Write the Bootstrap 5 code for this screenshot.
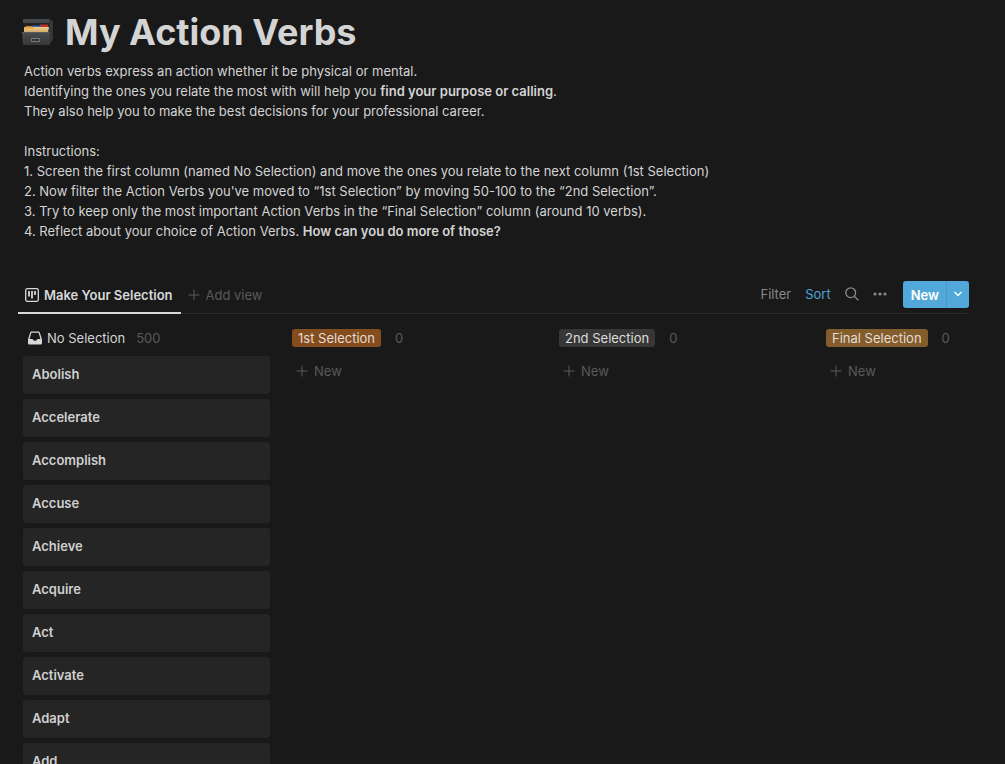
<!DOCTYPE html>
<html lang="en" data-bs-theme="dark">
<head>
<meta charset="utf-8">
<meta name="viewport" content="width=device-width, initial-scale=1">
<title>My Action Verbs</title>
<link href="https://cdn.jsdelivr.net/npm/bootstrap@5.3.0/dist/css/bootstrap.min.css" rel="stylesheet">
<style>
  body { background: #191919; color: #d4d4d4; font-family: Inter, "Liberation Sans", sans-serif; font-size: 13px; line-height: 20px; }
  .page { padding: 8px 36px 0 18px; }
  .page-title { font-size: 36px; line-height: 48px; font-weight: 700; color: #d4d4d4; }
  .page-head { gap: 11px; padding-left: 4px; }
  .intro { padding-left: 6px; margin-top: 5px; }
  .intro strong { font-weight: 600; }
  .views { margin-top: 36px; border-bottom: 1px solid #2a2a2a; height: 37px; }
  .plain-btn { background: none; border: 0; padding: 0; color: #5a5a5a; font-size: 13px; line-height: 20px; display: inline-flex; align-items: center; }
  .view-tab { color: #d8d8d8; font-weight: 600; gap: 5px; padding: 0 8px 0 7px; height: 37px; border-bottom: 2px solid #d8d8d8; }
  .add-view { gap: 6px; padding-left: 7px; }
  .tools { gap: 14px; padding-bottom: 2px; }
  .tools .plain-btn { color: #8a8a8a; }
  .tools .plain-btn.sorting { color: #4ba6d5; }
  .new-group { margin-left: 2px; }
  .new-group .btn { --bs-btn-bg: #52a9d9; --bs-btn-hover-bg: #4598c6; --bs-btn-color: #fff; --bs-btn-border-width: 0; font-size: 13px; line-height: 20px; font-weight: 600; padding: 4px 8px; border-radius: 3px; height: 27px; }
  .new-group .btn.arrow { border-left: 1px solid #469aca; padding: 0 6px; }
  .board { gap: 20px; padding: 13px 0 0 5px; }
  .board-col { flex: 0 0 247px; }
  .col-head { height: 22px; padding-left: 2px; }
  .col-head-none { padding-left: 5px; gap: 5px; }
  .count { color: #5a5a5a; margin-left: 14px; }
  .col-head-none .count { margin-left: 6px; }
  .tag { border-radius: 3px; padding: 0 6px; line-height: 18px; color: #e2dcd6; }
  .tag-orange { background: #854c1d; }
  .tag-gray { background: #373737; color: #dcdcdc; }
  .tag-yellow { background: #835e2c; }
  .add-new { gap: 6px; padding-left: 6px; margin-top: 12px; }
  .verbs { gap: 5px; margin-top: 7px; }
  .verb { background: #252525; border-radius: 3px; padding: 8px 9px 10px; font-weight: 600; color: #d0d0d0; }
</style>
</head>
<body class="vh-100 overflow-hidden">
<main class="page">
  <header class="page-head d-flex align-items-center">
    <svg width="32" height="30" viewBox="0 0 32 30" aria-hidden="true">
      <defs>
        <linearGradient id="front" x1="0" y1="0" x2="0" y2="1"><stop offset="0" stop-color="#4a4c4e"/><stop offset="1" stop-color="#353738"/></linearGradient>
        <linearGradient id="paper" x1="0" y1="0" x2="0" y2="1"><stop offset="0" stop-color="#f5d28c"/><stop offset="1" stop-color="#c9a46a"/></linearGradient>
      </defs>
      <path d="M2 2H27L31 4V23L27 28H2Z" fill="#2c2e2f"/>
      <path d="M1 2H27V6H1Z" fill="#46494b"/>
      <path d="M2 6H27V15H2Z" fill="#202122"/>
      <path d="M27 2L31 4V22L27 28Z" fill="#343637"/>
      <path d="M18 7.500H26V11H18Z" fill="#b93224"/>
      <path d="M11 8.500H19V11H11Z" fill="#3464b4"/>
      <path d="M2 10.500L4 9.500H10L12 10H27L26 16H2Z" fill="url(#paper)"/>
      <path d="M2 11.500L4 9.500H10L12 11.500Z" fill="#f09a38"/>
      <path d="M0 15H27.500V28H1Z" fill="url(#front)"/>
      <path d="M0 15.500H27.500" stroke="#5a5d60"/>
      <path d="M9.500 21.500V24.500H17.500V21.500Z" fill="#33363a" stroke="#75787a"/>
    </svg>
    <h1 class="page-title m-0">My Action Verbs</h1>
  </header>

  <section class="intro">
    <p class="m-0">Action verbs express an action whether it be physical or mental.<br>
    Identifying the ones you relate the most with will help you <strong>find your purpose or calling</strong>.<br>
    They also help you to make the best decisions for your professional career.<br><br>
    Instructions:<br>
    1. Screen the first column (named No Selection) and move the ones you relate to the next column (1st Selection)<br>
    2. Now filter the Action Verbs you've moved to “1st Selection” by moving 50-100 to the “2nd Selection”.<br>
    3. Try to keep only the most important Action Verbs in the “Final Selection” column (around 10 verbs).<br>
    4. Reflect about your choice of Action Verbs. <strong>How can you do more of those?</strong></p>
  </section>

  <div class="views d-flex justify-content-between">
    <div class="d-flex">
      <button type="button" class="plain-btn view-tab">
        <svg width="14" height="14" viewBox="0 0 14 14" fill="none" stroke="currentColor" aria-hidden="true"><rect x=".7" y=".7" width="12.600" height="12.600" rx="1.500" stroke-width="1.300"/><path d="M4 3V8.500M7 3V10.500M10 3V7" stroke-width="1.800"/></svg>
        Make Your Selection
      </button>
      <button type="button" class="plain-btn add-view">
        <svg width="12" height="12" viewBox="0 0 12 12" stroke="currentColor" aria-hidden="true"><path d="M6 .5V11.500M.5 6H11.500"/></svg>
        Add view
      </button>
    </div>
    <div class="tools d-flex align-items-center">
      <button type="button" class="plain-btn">Filter</button>
      <button type="button" class="plain-btn sorting">Sort</button>
      <button type="button" class="plain-btn" aria-label="Search"><svg width="14" height="14" viewBox="0 0 14 14" fill="none" stroke="currentColor" stroke-width="1.300" aria-hidden="true"><circle cx="5.700" cy="5.700" r="4.900"/><path d="M9.300 9.300L13.400 13.400"/></svg></button>
      <button type="button" class="plain-btn" aria-label="More"><svg width="14" height="4" viewBox="0 0 14 4" fill="currentColor" aria-hidden="true"><circle cx="2" cy="2" r="1.600"/><circle cx="7" cy="2" r="1.600"/><circle cx="12" cy="2" r="1.600"/></svg></button>
      <div class="btn-group new-group">
        <button type="button" class="btn">New</button>
        <button type="button" class="btn arrow" aria-label="More ways to add"><svg class="d-block" width="10" height="6" viewBox="0 0 10 6" fill="none" stroke="currentColor" stroke-width="1.400" aria-hidden="true"><path d="M1.500 1L5 4.500L8.500 1"/></svg></button>
      </div>
    </div>
  </div>

  <div class="board d-flex align-items-start overflow-hidden">
    <section class="board-col">
      <div class="col-head col-head-none d-flex align-items-center">
        <svg width="14" height="14" viewBox="0 0 15 14" aria-hidden="true"><path d="M3.400 0H11.600L12.600 .8L15 8.500V12.500Q15 14 13.500 14H1.500Q0 14 0 12.500V8.500L2.400 .8ZM3.600 1.400L1.700 8H4.600Q5 8 5.200 8.500Q6 10 7.500 10Q9 10 9.800 8.500Q10 8 10.400 8H13.300L11.400 1.400Z" fill="#d8d8d8" fill-rule="evenodd"/></svg>
        <span>No Selection</span><span class="count">500</span>
      </div>
      <div class="verbs d-flex flex-column">
        <div class="verb">Abolish</div>
        <div class="verb">Accelerate</div>
        <div class="verb">Accomplish</div>
        <div class="verb">Accuse</div>
        <div class="verb">Achieve</div>
        <div class="verb">Acquire</div>
        <div class="verb">Act</div>
        <div class="verb">Activate</div>
        <div class="verb">Adapt</div>
        <div class="verb">Add</div>
      </div>
    </section>
    <section class="board-col">
      <div class="col-head d-flex align-items-center"><span class="tag tag-orange">1st Selection</span><span class="count">0</span></div>
      <button type="button" class="plain-btn add-new"><svg width="12" height="12" viewBox="0 0 12 12" stroke="currentColor" aria-hidden="true"><path d="M6 .5V11.500M.5 6H11.500"/></svg>New</button>
    </section>
    <section class="board-col">
      <div class="col-head d-flex align-items-center"><span class="tag tag-gray">2nd Selection</span><span class="count">0</span></div>
      <button type="button" class="plain-btn add-new"><svg width="12" height="12" viewBox="0 0 12 12" stroke="currentColor" aria-hidden="true"><path d="M6 .5V11.500M.5 6H11.500"/></svg>New</button>
    </section>
    <section class="board-col">
      <div class="col-head d-flex align-items-center"><span class="tag tag-yellow">Final Selection</span><span class="count">0</span></div>
      <button type="button" class="plain-btn add-new"><svg width="12" height="12" viewBox="0 0 12 12" stroke="currentColor" aria-hidden="true"><path d="M6 .5V11.500M.5 6H11.500"/></svg>New</button>
    </section>
  </div>
</main>
<script src="https://cdn.jsdelivr.net/npm/bootstrap@5.3.0/dist/js/bootstrap.bundle.min.js"></script>
</body>
</html>
